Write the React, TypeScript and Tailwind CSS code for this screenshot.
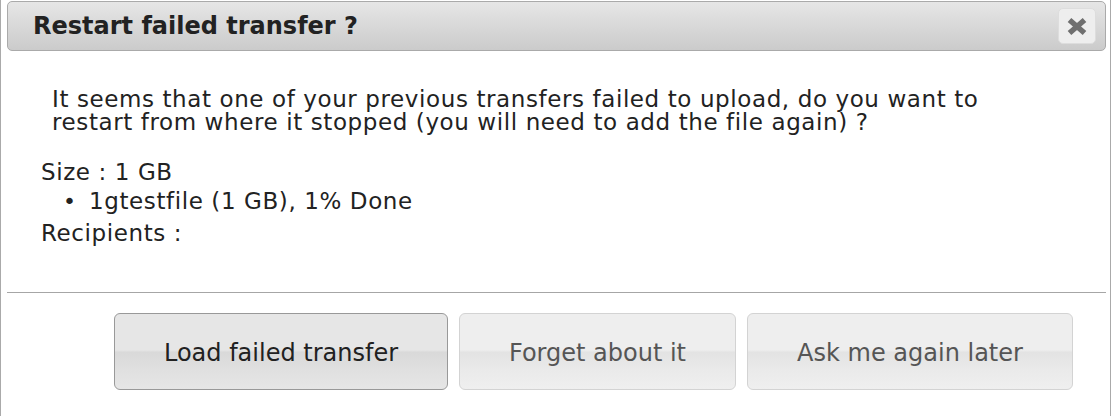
import React from "react";

const font = { fontFamily: '"DejaVu Sans", Verdana, sans-serif' };

export default function App() {
  return (
    <div className="w-[1112px] h-[416px] bg-white overflow-hidden" style={font}>
      <div className="w-[1111px] h-[416px] border-l border-r border-[#aaaaaa] pl-[6px] pr-[4px] flex flex-col">
        {/* Title bar */}
        <div className="mt-[1px] h-[50px] shrink-0 rounded-[5px] border border-[#aaaaaa] bg-[linear-gradient(to_bottom,#e6e6e6,#cbcbcb)] flex items-center justify-between pl-[25px] pr-[9px]">
          <span className="text-[24px] font-bold text-[#222222] leading-none">Restart failed transfer ?</span>
          <button className="w-[38px] h-[36px] rounded-[5px] bg-[#eeeeee] border border-[#dddddd] flex items-center justify-center">
            <svg width="22" height="19" viewBox="0 0 22 19" className="blur-[0.5px]">
              <path d="M3.5 3 L18.5 16 M18.5 3 L3.5 16" stroke="#6f6f6f" strokeWidth="5.5" strokeLinecap="butt" fill="none" />
            </svg>
          </button>
        </div>

        {/* Content */}
        <div className="h-[241px] shrink-0 pl-[34px] text-[#222222] text-[23px] leading-[23px] tracking-[0.6px]">
          <p className="mt-[37px] pl-[11px] whitespace-nowrap">
            It seems that one of your previous transfers failed to upload, do you want to
            <br />
            restart from where it stopped (you will need to add the file again) ?
          </p>
          <div className="mt-[27px]">Size : 1 GB</div>
          <div className="mt-[6px] flex items-center">
            <span className="w-[48px] pl-[22px] text-[22px] leading-none tracking-normal">•</span>
            <span>1gtestfile (1 GB), 1% Done</span>
          </div>
          <div className="mt-[9px]">Recipients :</div>
        </div>

        {/* Button pane */}
        <div className="h-[1px] bg-[#a6a6a6] shrink-0" />
        <div className="flex justify-end gap-[11px] pt-[20px] pr-[33px]">
          <button className="w-[334px] h-[77px] rounded-[6px] border border-[#999999] bg-[linear-gradient(to_bottom,#e6e6e6_0%,#e6e6e6_48%,#d9d9d9_51%,#e0e0e0_75%,#e6e6e6_100%)] text-[24px] text-[#212121] pt-[2px]">
            Load failed transfer
          </button>
          <button className="w-[277px] h-[77px] rounded-[6px] border border-[#d3d3d3] bg-[linear-gradient(to_bottom,#eeeeee_0%,#eeeeee_48%,#e3e3e3_51%,#eaeaea_75%,#efefef_100%)] text-[24px] text-[#555555] pt-[2px]">
            Forget about it
          </button>
          <button className="w-[326px] h-[77px] rounded-[6px] border border-[#d3d3d3] bg-[linear-gradient(to_bottom,#eeeeee_0%,#eeeeee_48%,#e3e3e3_51%,#eaeaea_75%,#efefef_100%)] text-[24px] text-[#555555] pt-[2px]">
            Ask me again later
          </button>
        </div>
      </div>
    </div>
  );
}
